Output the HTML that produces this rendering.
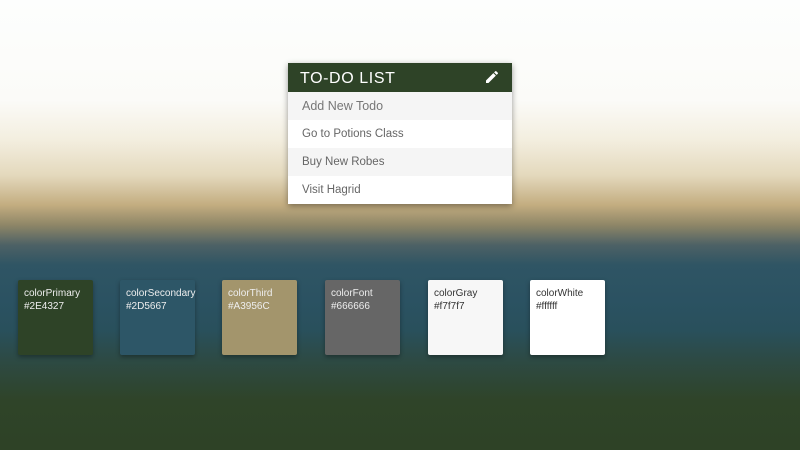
<!DOCTYPE html>
<html><head><style>
*{margin:0;padding:0;box-sizing:border-box}
body{width:800px;height:450px;overflow:hidden;font-family:"Liberation Sans",sans-serif;
background:linear-gradient(to bottom,#fdfefd 0px,#fbfbf8 100px,#f3eedf 140px,#e4d9bd 175px,#c3ad80 205px,#8e8667 225px,#4d6165 245px,#2f5564 265px,#2b5262 300px,#29505c 330px,#2d4a44 360px,#2f4429 400px,#2e4226 450px);position:relative}
.card{position:absolute;left:288px;top:63px;width:224px;background:#fff;box-shadow:0 2px 6px rgba(0,0,0,.4)}
.hd{height:29px;background:#2E4327;color:#fff;font-size:16px;letter-spacing:.6px;padding:7px 12px;position:relative}
.hd svg{position:absolute;right:12px;top:6px}
.r{height:28px;padding:0 14px;line-height:28px;font-size:11.5px;color:#666}
.g{background:#f5f5f5}
.add{font-size:12.5px;color:#777}
.sw{position:absolute;top:280px;width:75px;height:75px;border-radius:2px;box-shadow:0 2px 5px rgba(0,0,0,.35);padding:8px 6px;font-size:10px;line-height:12.5px;color:#eee}
</style></head><body>
<div class="card">
<div class="hd">TO-DO LIST<svg width="16" height="16" viewBox="0 0 24 24"><path fill="#fff" d="M3 17.25V21h3.75L17.81 9.94l-3.75-3.75L3 17.25zM20.71 7.04a1 1 0 0 0 0-1.41l-2.34-2.34a1 1 0 0 0-1.41 0l-1.83 1.83 3.75 3.75 1.830-1.83z"/></svg></div>
<div class="r g add">Add New Todo</div>
<div class="r">Go to Potions Class</div>
<div class="r g">Buy New Robes</div>
<div class="r">Visit Hagrid</div>
</div>
<div class="sw" style="left:18px;background:#2E4327">colorPrimary<br>#2E4327</div>
<div class="sw" style="left:120px;background:#2D5667">colorSecondary<br>#2D5667</div>
<div class="sw" style="left:222px;background:#A3956C">colorThird<br>#A3956C</div>
<div class="sw" style="left:325px;background:#666666">colorFont<br>#666666</div>
<div class="sw" style="left:428px;background:#f7f7f7;color:#333">colorGray<br>#f7f7f7</div>
<div class="sw" style="left:530px;background:#ffffff;color:#333">colorWhite<br>#ffffff</div>
</body></html>
